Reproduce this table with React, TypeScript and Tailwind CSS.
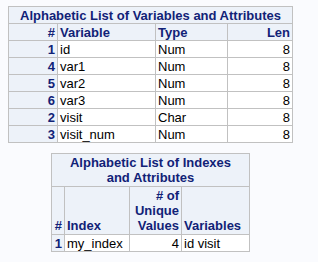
const VARS = [
  { n: 1, name: 'id', type: 'Num', len: 8 },
  { n: 4, name: 'var1', type: 'Num', len: 8 },
  { n: 5, name: 'var2', type: 'Num', len: 8 },
  { n: 6, name: 'var3', type: 'Num', len: 8 },
  { n: 2, name: 'visit', type: 'Char', len: 8 },
  { n: 3, name: 'visit_num', type: 'Num', len: 8 },
];

const hd = 'border border-[#c1c1c1] bg-[#edf2f9] text-[#112277] font-bold leading-[15px] pt-px px-[2px]';
const cell = 'border border-[#c1c1c1] bg-white text-black leading-[15px] pt-px px-[2px]';

export default function App() {
  return (
    <div
      className="min-h-[262px] bg-[#fafbfe] pt-[6px] text-[13px]"
      style={{ fontFamily: '"Liberation Sans", Arial, sans-serif' }}
    >
      {/* Variables */}
      <table className="ml-[8px] w-[285px] table-fixed border-collapse">
        <colgroup>
          <col className="w-[49px]" />
          <col className="w-[98px]" />
          <col className="w-[72px]" />
          <col className="w-[65px]" />
        </colgroup>
        <thead>
          <tr>
            <th colSpan={4} className={`${hd} text-center`}>
              Alphabetic List of Variables and Attributes
            </th>
          </tr>
          <tr>
            <th className={`${hd} text-right`}>#</th>
            <th className={`${hd} text-left`}>Variable</th>
            <th className={`${hd} text-left`}>Type</th>
            <th className={`${hd} text-right`}>Len</th>
          </tr>
        </thead>
        <tbody>
          {VARS.map((v) => (
            <tr key={v.name}>
              <th className={`${hd} text-right`}>{v.n}</th>
              <td className={cell}>{v.name}</td>
              <td className={cell}>{v.type}</td>
              <td className={`${cell} text-right`}>{v.len}</td>
            </tr>
          ))}
        </tbody>
      </table>

      {/* Indexes */}
      <table className="ml-[51px] mt-[10px] w-[199px] table-fixed border-collapse">
        <colgroup>
          <col className="w-[13px]" />
          <col className="w-[65px]" />
          <col className="w-[52px]" />
          <col className="w-[68px]" />
        </colgroup>
        <thead>
          <tr>
            <th colSpan={4} className={`${hd} text-center py-px`}>
              Alphabetic List of Indexes
              <br />
              and Attributes
            </th>
          </tr>
          <tr>
            <th className={`${hd} py-px text-right align-bottom`}>#</th>
            <th className={`${hd} py-px text-left align-bottom`}>Index</th>
            <th className={`${hd} py-px text-right align-bottom`}>
              # of
              <br />
              Unique
              <br />
              Values
            </th>
            <th className={`${hd} py-px text-left align-bottom`}>Variables</th>
          </tr>
        </thead>
        <tbody>
          <tr>
            <th className={`${hd} text-right`}>1</th>
            <td className={cell}>my_index</td>
            <td className={`${cell} text-right`}>4</td>
            <td className={cell}>id visit</td>
          </tr>
        </tbody>
      </table>
    </div>
  );
}
